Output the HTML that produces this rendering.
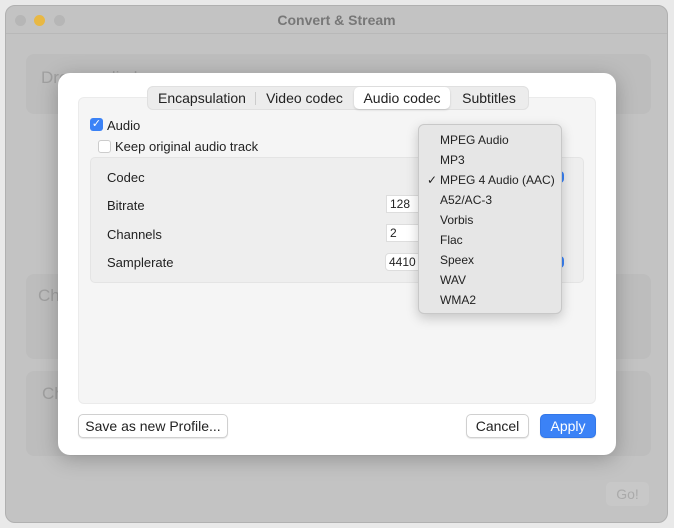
<!DOCTYPE html>
<html><head><style>
*{box-sizing:border-box;margin:0;padding:0}
body{width:674px;height:528px;background:#e9e9e9;font-family:"Liberation Sans",sans-serif;position:relative;overflow:hidden;color:#222}
.a{position:absolute}
.win{left:5px;top:5px;width:663px;height:518px;background:#c3c3c3;border-radius:10px;border:1px solid #b0b0b0}
.title{left:0;top:0;width:661px;height:28px;border-bottom:1px solid #b8b8b8;text-align:center;font-size:14px;font-weight:bold;color:#777;line-height:28px}
.dot{width:11px;height:11px;border-radius:50%;background:#b6b6b6;top:9px}
.ghost{background:#bdbdbd;border-radius:8px}
.sheet{left:58px;top:73px;width:558px;height:382px;background:#fff;border-radius:12px;box-shadow:0 4px 20px rgba(0,0,0,.25)}
.panel{left:20px;top:24px;width:518px;height:307px;background:#f5f5f5;border-radius:6px;border:1px solid #ebebeb}
.tabs{left:89px;top:13px;width:382px;height:24px;background:#ececec;border-radius:6px;border:1px solid #e0e0e0;font-size:14px}
.tab{top:0;height:22px;line-height:22px;text-align:center}
.f{font-size:13px}
.btn{background:#fff;border:1px solid #d0d0d0;border-radius:5px;font-size:14px;text-align:center;line-height:22px;height:24px;box-shadow:0 1px 1px rgba(0,0,0,.1)}
.menu{left:418px;top:124px;width:144px;height:190px;background:#e6e6e6;border-radius:6px;border:1px solid #c8c8c8;box-shadow:0 4px 12px rgba(0,0,0,.2);font-size:12px}
.menu div{position:absolute;left:21px}
.inp{background:#fff;border:1px solid #ddd;font-size:12px;height:18px;line-height:16px;padding-left:3px}
</style></head><body>
<div class="a win">
<div class="a title">Convert &amp; Stream</div>
<div class="a dot" style="left:9px"></div>
<div class="a dot" style="left:28px;background:#e8b844"></div>
<div class="a dot" style="left:48px"></div>
<div class="a ghost" style="left:20px;top:48px;width:625px;height:60px"></div>
<div class="a" style="left:35px;top:62px;font-size:17px;color:#a0a0a0">Drop media here</div>
<div class="a ghost" style="left:20px;top:268px;width:625px;height:85px"></div>
<div class="a" style="left:32px;top:280px;font-size:17px;color:#a0a0a0">Ch</div>
<div class="a ghost" style="left:20px;top:365px;width:625px;height:85px"></div>
<div class="a" style="left:36px;top:378px;font-size:17px;color:#a0a0a0">Ch</div>
<div class="a" style="left:600px;top:476px;width:43px;height:24px;border-radius:5px;background:#c8c8c8;color:#aaa;font-size:14px;text-align:center;line-height:24px">Go!</div>
</div>
<div class="a sheet">
<div class="a panel"></div>
<div class="a tabs">
<div class="a tab" style="left:2px;width:104px">Encapsulation</div>
<div class="a" style="left:107px;top:5px;width:1px;height:13px;background:#ccc"></div>
<div class="a tab" style="left:108px;width:97px">Video codec</div>
<div class="a tab" style="left:206px;width:96px;background:#fff;border-radius:5px;box-shadow:0 1px 2px rgba(0,0,0,.15)">Audio codec</div>
<div class="a tab" style="left:303px;width:76px">Subtitles</div>
</div>
<div class="a" style="left:32px;top:45px;width:13px;height:13px;background:#3b82f6;border-radius:3px;color:#fff;font-size:11px;text-align:center;line-height:13px">✓</div>
<div class="a f" style="left:49px;top:45px">Audio</div>
<div class="a" style="left:40px;top:67px;width:13px;height:13px;background:#fff;border:1px solid #ccc;border-radius:3px"></div>
<div class="a f" style="left:57px;top:66px">Keep original audio track</div>
<div class="a" style="left:32px;top:84px;width:494px;height:126px;background:#eeeeee;border-radius:5px;border:1px solid #e4e4e4"></div>
<div class="a f" style="left:49px;top:97px">Codec</div>
<div class="a f" style="left:49px;top:125px">Bitrate</div>
<div class="a f" style="left:49px;top:154px">Channels</div>
<div class="a f" style="left:49px;top:182px">Samplerate</div>
<div class="a inp" style="left:328px;top:122px;width:40px">128</div>
<div class="a inp" style="left:328px;top:151px;width:40px">2</div>
<div class="a inp" style="left:327px;top:180px;width:40px;border-radius:4px">4410</div>
<div class="a" style="left:500px;top:98px;width:6px;height:12px;background:#3b82f6;border-radius:0 4px 4px 0"></div>
<div class="a" style="left:500px;top:183px;width:6px;height:12px;background:#3b82f6;border-radius:0 4px 4px 0"></div>
<div class="a btn" style="left:20px;top:341px;width:150px">Save as new Profile...</div>
<div class="a btn" style="left:408px;top:341px;width:63px">Cancel</div>
<div class="a btn" style="left:482px;top:341px;width:56px;background:#3b82f6;color:#fff;border-color:#3377e8">Apply</div>
</div>
<div class="a menu">
<div style="top:8px">MPEG Audio</div>
<div style="top:28px">MP3</div>
<div style="top:48px">MPEG 4 Audio (AAC)</div>
<div style="top:48px;left:8px">✓</div>
<div style="top:68px">A52/AC-3</div>
<div style="top:88px">Vorbis</div>
<div style="top:108px">Flac</div>
<div style="top:128px">Speex</div>
<div style="top:148px">WAV</div>
<div style="top:168px">WMA2</div>
</div>
</body></html>
